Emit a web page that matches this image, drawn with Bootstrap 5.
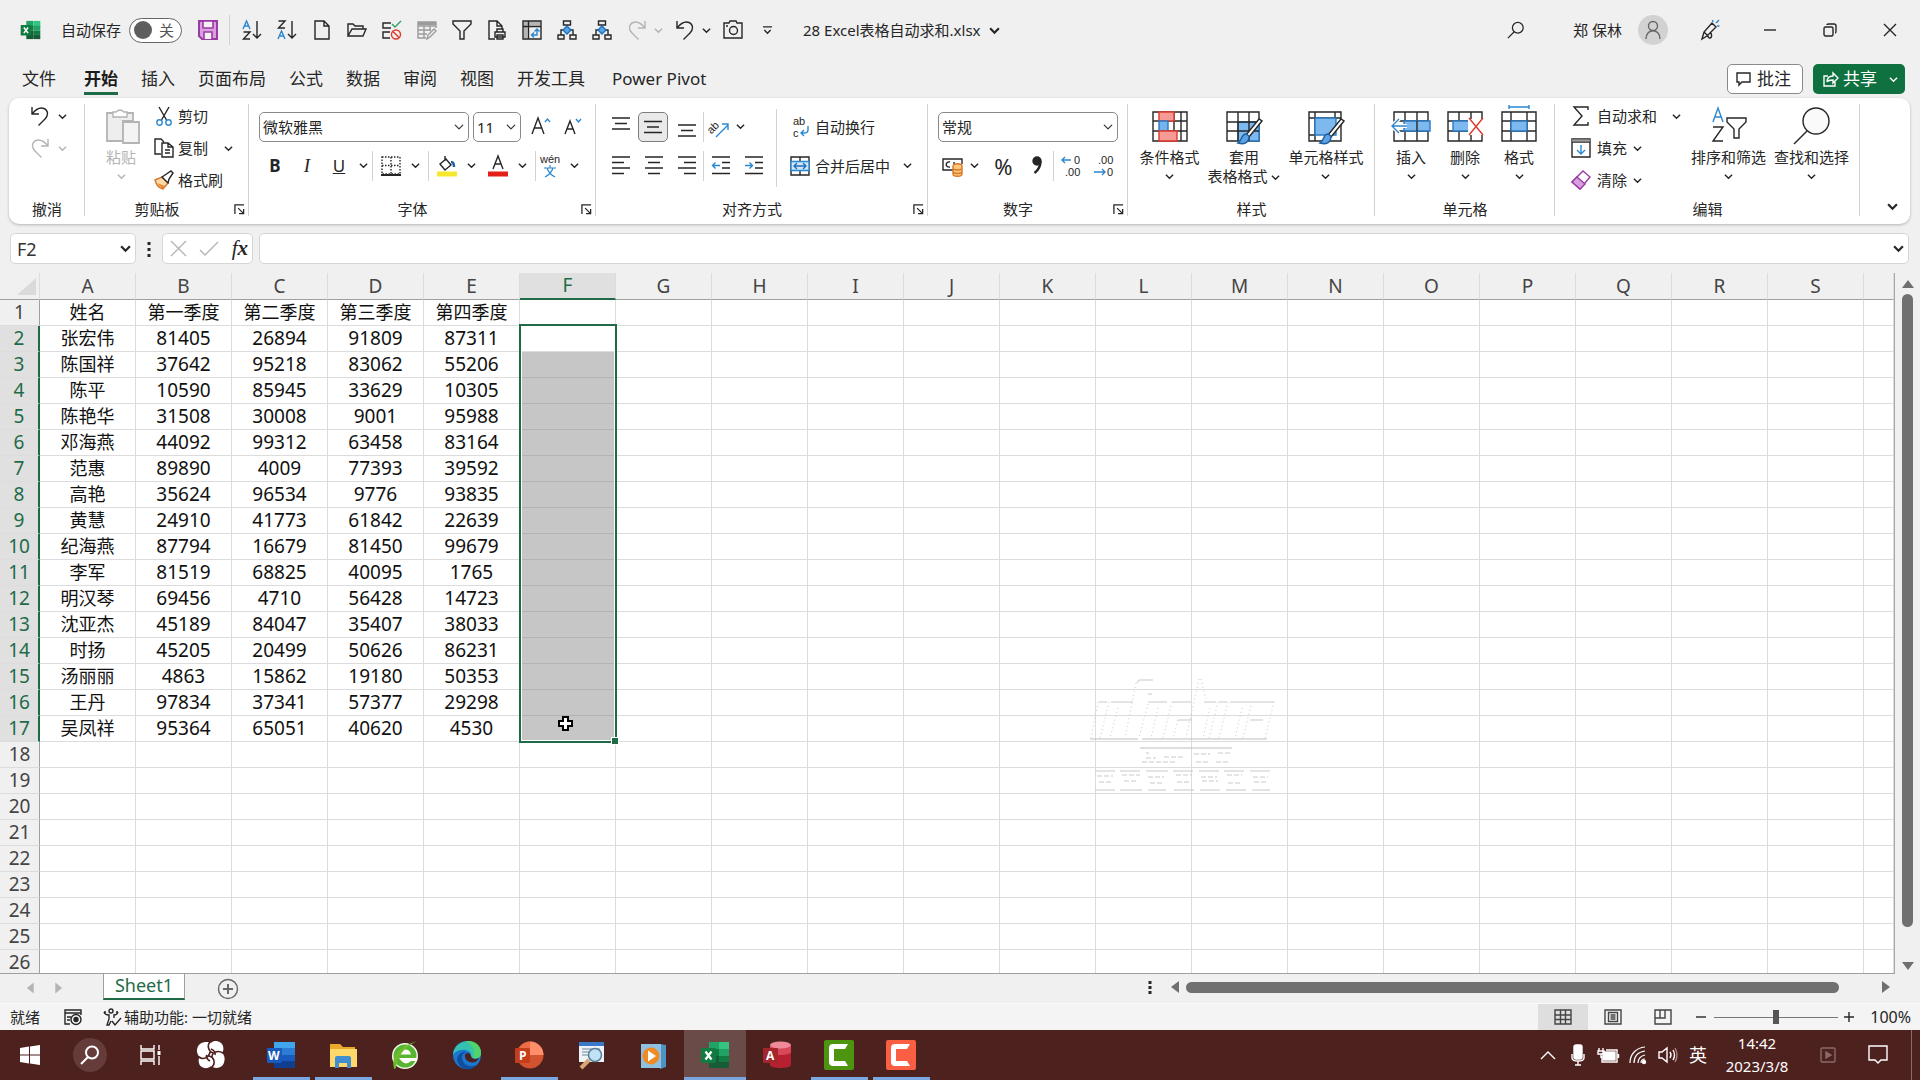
<!DOCTYPE html>
<html lang="zh-CN">
<head>
<meta charset="utf-8">
<meta name="viewport" content="width=device-width, initial-scale=1">
<title>28 Excel表格自动求和.xlsx</title>
<link href="https://cdn.jsdelivr.net/npm/bootstrap@5.3.0/dist/css/bootstrap.min.css" rel="stylesheet">
<style>
:root{--ink:#262626;--line:#d2d2d2;--green:#1f6b47;--chrome:#f0f0f0;--blue:#2b88d0}
body{background:var(--chrome);color:var(--ink);font:15px/20px "Noto Sans","Noto Sans CJK SC",sans-serif;overflow:hidden}
button{border:0;background:none;padding:0;color:inherit;font:inherit;white-space:nowrap}
svg{display:block;fill:none;stroke:currentColor;stroke-width:1.4;flex:none;overflow:visible}
svg text{stroke:none;fill:currentColor}
svg .tiny{font-family:"Liberation Sans",sans-serif;font-size:11px}
.ic{width:20px;height:20px}
.solid{fill:#6f6f6f;stroke:none}
.dim{color:#b4b4b4}
.chev{width:9px;height:9px;stroke-width:1.6}
.chev-lg{width:11px;height:11px;stroke-width:2}
.cell-btn{width:35px;height:34px;display:flex;align-items:center;justify-content:center}
.caret-btn{width:13px;height:34px;display:flex;align-items:center;justify-content:flex-start}
/* title bar */
.titlebar{height:60px;padding-left:20px}
.auto-toggle{width:53px;height:25px;border:1px solid #666;border-radius:13px;background:#fff;padding:0 7px 0 4px;color:#555}
.auto-toggle input{appearance:none;width:18px;height:18px;border-radius:50%;background:#5e5e5e;margin:0}
.vline{width:1px;height:30px;background:var(--line)}
.vline.tall{height:78px;margin:9px 12px 0 6px}
.doc-title{margin-left:18px}
.avatar{width:30px;height:30px;border-radius:50%;background:#d2d2d2;margin-right:12px}
.win-btn{width:60px;height:34px;display:flex;align-items:center;justify-content:center}
/* tabs */
.tabs{height:38px;padding:0 15px 0 22px}
.tabs .nav-link{padding:2px 0 0;margin-right:23px;color:var(--ink);font-size:17px;line-height:26px;border-bottom:3px solid transparent}
.tabs .nav-link:first-child{margin-right:28px}
.tabs .nav-link.active{font-weight:700;border-color:var(--green);color:#1c1c1c}
.top-btn{height:30px;border-radius:5px;font-size:17px;line-height:28px}
.top-btn.comment{border:1px solid #8a8a8a;background:#fff;width:76px;padding:0 8px;gap:6px}
.top-btn.share{background:#0f7040;color:#fff;width:92px;margin-left:10px;padding:0 7px 0 10px;gap:4px}
/* ribbon */
.ribbon{margin:0 10px 0 9px;height:126px;background:#fff;border-radius:10px;box-shadow:0 1px 3px rgba(0,0,0,.25);padding-top:2px}
.rgroup{background:linear-gradient(var(--line),var(--line)) right 4px/1px 112px no-repeat;height:117px}
.glabel{font-size:15px;line-height:18px;height:18px;text-align:center}
.rbody{height:100px}
.launch{width:20px;height:18px;display:flex;align-items:center;justify-content:center}
.stack button{height:32px;display:flex;align-items:center;gap:4px}
.stack.wide button{gap:6px}
.clip-list{padding-left:13px}
.two{padding-top:7px}
.two>div{height:39px;display:flex;align-items:center}
.big{display:flex;flex-direction:column;align-items:center;padding-top:9px}
.big svg.bi{width:40px;height:36px}
.big span{line-height:22px;margin-top:1px}
.big span.second{margin-top:-3px}
.big .chev{margin-top:4px}
.big+.big.find-big{margin-left:8px}
.big.sort-big{margin-left:10px}
.cells-row{gap:14px}
.tool{width:33px;height:30px;display:flex;align-items:center;justify-content:center}
.slim .tool{width:32px}
.tool.on{width:30px;margin:0 2px 0 1px;border:1px solid #7d7d7d;border-radius:5px;background:#e9e9e9}
.t-bold{font-size:17px;font-weight:700}
.t-ital{font:italic 19px "Liberation Serif",serif}
.t-under{font-size:17px;text-decoration:underline}
.t-pct{font-size:22px}
.split{width:37px;height:30px;display:flex;align-items:center;justify-content:space-between}
.slim .split{width:39px}
.split.near{margin-left:12px}
.combo{height:30px;border:1px solid #8a8a8a;border-radius:5px;font-size:15px;line-height:20px;padding:0 18px 0 3px;background-color:#fff;background-size:10px 10px;background-position:right 4px center;color:var(--ink)}
.w-font{width:210px}.w-size{width:48px}.w-num{width:180px}
.p10{padding-left:10px}
.g-undo{width:76px}.g-undo .stack{padding-left:21px}.g-clip{width:164px}.g-font{width:347px}.g-align{width:332px}.g-num{width:200px}.g-style{width:247px}.g-cells{width:180px}.g-edit{width:305px}
.edit-list{width:126px;padding-left:16px}
/* formula bar */
.fbar{padding:9px 11px 9px 10px}
.fbox{height:31px;background:#fff;border:1px solid #d6d6d6;border-radius:5px}
.fbox input{border:0;outline:0;background:none;width:100%;min-width:0;font-size:18px;line-height:24px;padding:0 6px;color:#333}
.namebox{width:126px}.fxbox{width:91px;margin-right:6px}
.fx{font:italic 700 21px "Liberation Serif",serif}
/* grid */
.grid-wrap{min-height:0}
.sheet{min-width:0;overflow:hidden;background:#fff;border-right:1px solid #a8a8a8;border-bottom:1px solid #a0a0a0}
.sheet table{table-layout:fixed;border-collapse:separate;border-spacing:0;width:100%;font-size:19px;line-height:25px;color:#111}
.sheet col.rowno{width:40px}.sheet col.std{width:96px}
.sheet th,.sheet td{height:26px;padding:0;text-align:center;border-right:1px solid #dcdcdc;border-bottom:1px solid #dcdcdc;overflow:hidden;white-space:nowrap}
.sheet th{background:var(--chrome);font-weight:400;color:#444}
.sheet thead th{border-bottom-color:#a0a0a0}
.sheet tbody th{border-right-color:#a0a0a0}
.sheet .zh{font-size:18px}
.sheet th.hit{background:#e0e0e0;color:var(--green)}
.sheet thead th.hit{border-bottom:2px solid var(--green)}
.sheet tbody th.hit{border-right:2px solid var(--green)}
.sheet td.shade{background:#c6c6c6;border-bottom-color:#b3b3b3}
.corner{width:0;height:0;border-left:19px solid transparent;border-bottom:17px solid #dadada;margin-left:17px}
.selbox{left:519px;top:51px;width:98px;height:419px;border:2px solid var(--green);outline:1px solid #fff;outline-offset:-3px}
.selbox i{right:-3px;bottom:-3px;width:6px;height:6px;background:var(--green);box-shadow:0 0 0 1px #fff}
.pointer{left:558px;top:443px;width:15px;height:15px}
.wm{left:1090px;top:402px;width:190px;height:126px;color:#c9c9c9;stroke-width:1}
.vscroll{width:25px;flex:none;padding:6px 0 3px}
.vthumb{width:11px;background:#707070;border-radius:6px;margin:5px 0 34px}
.tri{fill:#6f6f6f;stroke:none;width:12px;height:10px}
/* bottom bars */
.sheetbar{height:29px}
.sheet-nav{gap:21px;padding:9px 41px 0 27px}
.sheet-tab{width:82px;height:26px;background:#fff;color:var(--green);font-size:18px;line-height:20px;padding-bottom:3px;border:solid #a0a0a0;border-width:0 1px;border-bottom:2px solid var(--green);text-align:center;margin-right:32px}
.hscroll{padding:4px 29px 0 0}
.hthumb{height:11px;background:#707070;border-radius:6px;width:653px;margin:0 42px 0 6px}
.status{height:27px;background:#f4f4f4;border-top:1px solid #fafafa}
.ready{margin:0 24px 0 10px}
.view-btn{width:50px;height:26px;display:flex;align-items:center;justify-content:center;color:#444}
.view-btn.on{background:#dedede}
.zoom-range{appearance:none;width:124px;height:20px;background:linear-gradient(#777,#777) center/100% 1px no-repeat}
.zoom-range::-webkit-slider-thumb{appearance:none;width:6px;height:14px;background:#555}
.zoom-val{font-size:16px;margin:0 9px 0 12px}
.taskbar{height:50px;background:#4c211e;color:#fff}
.task{width:62px;height:50px;display:flex;align-items:center;justify-content:center;border-bottom:3px solid transparent}
.task svg{width:30px;height:30px;stroke:none;margin-top:2px}
.task svg text{font:700 12px "Open Sans","Noto Sans",sans-serif;fill:#fff}
.task.run{border-image:linear-gradient(90deg,transparent 6px,#7aa7df 6px,#7aa7df 57px,transparent 57px) 3}
.task.cur{background:#6b4b47;border-bottom-color:#7aa7df}
.sys{width:60px;height:50px;display:flex;align-items:center;justify-content:center}
.round{width:34px;height:34px;border-radius:50%;background:#663c3a;display:flex;align-items:center;justify-content:center}
.round svg{stroke-width:2}
.tray{width:30px;height:50px;display:flex;align-items:center;justify-content:center}
.ime{font-size:18px}
.clock{width:88px;font-size:15px;line-height:23px;text-align:center}
.faint{color:#8a6a68;margin:0 20px 0 12px}
.edge-line{width:1px;height:50px;background:#8a6a68;margin:0 8px 0 18px}
</style>
<script src="https://cdn.jsdelivr.net/npm/bootstrap@5.3.0/dist/js/bootstrap.bundle.min.js"></script>
</head>
<body class="vh-100 d-flex flex-column">
<svg width="0" height="0" class="position-absolute" aria-hidden="true">
<symbol id="chev" viewBox="0 0 10 10"><path d="M1 3l4 4 4-4"/></symbol>
<symbol id="undo" viewBox="0 0 20 20"><path d="M2 1v7h7M2 8C6 3 10 1 14 2.500c5 2.500 4 7.500 1 10.500L8.500 19.500"/></symbol>
<symbol id="redo" viewBox="0 0 20 20"><path d="M18 1v7h-7M18 8C14 3 10 1 6 2.500c-5 2.500-4 7.500-1 10.500l6.500 6.500"/></symbol>
<symbol id="org" viewBox="0 0 20 20"><path d="M6.500 1h7v4h-7zM1 15h6v4H1zM13 15h6v4h-6zM10 5v2M4 15v-5h12v5"/><path d="M10 6l4 4-4 4-4-4z" fill="#56a4e6" stroke="#1f70b8"/></symbol>
<symbol id="launch" viewBox="0 0 12 12"><path d="M1 11V1h10M4.500 4.500L10.500 10.500M10.500 5.500v5h-5"/></symbol>
<symbol id="excel" viewBox="0 0 30 30"><g stroke="none"><path d="M9 2h10v8H9z" fill="#21a366"/><path d="M19 2h10v8H19z" fill="#33c481"/><path d="M9 9h10v7H9z" fill="#107c41"/><path d="M19 9h10v7H19z" fill="#21a366"/><path d="M9 16h10v12H9z" fill="#185c37"/><path d="M19 16h10v6H19z" fill="#107c41"/><path d="M19 22h10v6H19z" fill="#185c37"/><rect x="1" y="8" width="15" height="15" rx="1" fill="#107c41"/></g><path d="M5.500 11.500l6 8M11.500 11.500l-6 8" stroke="#fff" stroke-width="2.200"/></symbol>
<symbol id="find" viewBox="0 0 20 20"><circle cx="12" cy="7.500" r="6"/><path d="M8 12l-7 7"/></symbol>
</svg>

<header class="titlebar d-flex align-items-center flex-shrink-0">
  <svg width="21" height="22"><use href="#excel"/></svg>
  <label for="autosave" class="ms-3 ps-1">自动保存</label>
  <label class="auto-toggle d-flex align-items-center justify-content-between ms-2"><input type="checkbox" role="switch" id="autosave">关</label>
  <button class="cell-btn ms-2 me-1" aria-label="保存"><svg class="ic" viewBox="0 0 20 20" color="#9b3aa5"><path d="M1 1h18v18H4l-3-3z" fill="#d9a0de" stroke-width="2"/><path d="M5 1h10v7H5zM6 19v-7h8v7" fill="#f3f0f3" stroke-width="1.600"/></svg></button>
  <div class="vline me-1"></div>
  <button class="cell-btn" aria-label="升序"><svg class="ic" viewBox="0 0 20 20"><path d="M1 9l3.500-8L8 9M2 6h5" stroke="#2b88d0"/><path d="M1.500 12H8l-6.500 7H8M15 1v17M11 14l4 4 4-4"/></svg></button>
  <button class="cell-btn" aria-label="降序"><svg class="ic" viewBox="0 0 20 20"><path d="M1 19l3.500-8L8 19M2 16h5" stroke="#2b88d0"/><path d="M1.500 1H8L1.500 8H8M15 1v17M11 14l4 4 4-4"/></svg></button>
  <button class="cell-btn" aria-label="新建"><svg class="ic" viewBox="0 0 20 20"><path d="M3 1h9l5 5v13H3zM12 1v5h5"/></svg></button>
  <button class="cell-btn" aria-label="打开"><svg class="ic" viewBox="0 0 20 20"><path d="M1 16V4h5l2 2h8v3M1 16L5 9h14l-3 7z"/></svg></button>
  <button class="cell-btn" aria-label="拼写检查"><svg class="ic" viewBox="0 0 20 20"><path d="M9 3H1v5h8M8 12H1v6h7"/><path d="M10 4l3 3 6-6" stroke="#2e9e62"/><circle cx="14" cy="14.500" r="4.500" stroke="#e0392b"/><path d="M11 11.500l6 6" stroke="#e0392b"/></svg></button>
  <button class="cell-btn" aria-label="编辑表格"><svg class="ic" viewBox="0 0 20 20" color="#9b9b9b"><path d="M9 18H1V2h18v6M1 6h18M1 10h13M1 14h9M7 6v12M13 6v5M10 19l1-4 6-6 2 2-6 6z"/><path d="M1 3.500h18" stroke-width="3"/></svg></button>
  <button class="cell-btn" aria-label="筛选"><svg class="ic" viewBox="0 0 20 20"><path d="M1 1h18v3l-7 7v8H8v-8L1 4z"/></svg></button>
  <button class="cell-btn" aria-label="打印预览"><svg class="ic" viewBox="0 0 20 20"><path d="M8 19H2V1h8l5 5v3M10 1v5h5M8 12h10v5H8zM10 12V9h6v3M10 15h6v4h-6z"/></svg></button>
  <button class="cell-btn" aria-label="数据透视表"><svg class="ic" viewBox="0 0 20 20"><path d="M2 3.500h16M3.500 2v16" stroke="#b5b5b5" stroke-width="4"/><path d="M1 1h18v18H1zM1 6.500h18M6.500 1v18"/><path d="M10 15h5V9M12 12.500L9.500 15l2.500 2.500M12.500 11.500L15 9l2.500 2.500" stroke="#2b88d0"/></svg></button>
  <button class="cell-btn" aria-label="组织"><svg class="ic"><use href="#org"/></svg></button>
  <button class="cell-btn" aria-label="关系"><svg class="ic"><use href="#org"/></svg></button>
  <button class="cell-btn dim" aria-label="恢复"><svg class="ic"><use href="#redo"/></svg></button>
  <button class="caret-btn dim" aria-label="恢复选项"><svg class="chev"><use href="#chev"/></svg></button>
  <button class="cell-btn" aria-label="撤消"><svg class="ic"><use href="#undo"/></svg></button>
  <button class="caret-btn" aria-label="撤消选项"><svg class="chev"><use href="#chev"/></svg></button>
  <button class="cell-btn" aria-label="照相机"><svg class="ic" viewBox="0 0 20 20"><path d="M1 3h5l1-2h6l1 2h5v15H1z"/><circle cx="10.500" cy="10.500" r="4"/><path d="M3 6h2"/></svg></button>
  <button class="cell-btn" aria-label="自定义"><svg class="chev" viewBox="0 0 10 10"><path d="M0 1h10M1.500 4.500L5 8l3.500-3.500"/></svg></button>
  <div class="doc-title">28 Excel表格自动求和.xlsx</div>
  <button class="ms-1 ps-1" aria-label="文件名选项"><svg class="chev-lg"><use href="#chev"/></svg></button>
  <div class="ms-auto d-flex align-items-center">
    <button class="me-5" aria-label="搜索"><svg width="18" height="18"><use href="#find"/></svg></button>
    <span class="me-3">郑 保林</span>
    <span class="avatar d-flex align-items-center justify-content-center"><svg class="ic" viewBox="0 0 20 20" color="#666"><circle cx="10" cy="6" r="4.500"/><path d="M3 19c0-11 14-11 14 0"/></svg></span>
    <button class="win-btn" aria-label="新功能"><svg class="ic" viewBox="0 0 20 20"><path d="M2 19L4 12L12 3l4 4L7 16zM4 12l4 4M8 16c1 4 5 2 3-3"/><path d="M13 2l-.500-2M16 3l3-3M17 6h2.500" stroke="#2b88d0"/></svg></button>
    <button class="win-btn" aria-label="最小化"><svg width="14" height="14"><path d="M1 7h12"/></svg></button>
    <button class="win-btn" aria-label="还原"><svg width="14" height="14"><rect x="1" y="4" width="9" height="9" rx="1.500"/><path d="M4 2q0-1 2-1h5q2 0 2 2v5q0 2-1 2"/></svg></button>
    <button class="win-btn" aria-label="关闭"><svg width="14" height="14"><path d="M1 1l12 12M13 1L1 13"/></svg></button>
  </div>
</header>

<nav class="tabs nav flex-nowrap align-items-center flex-shrink-0">
  <a class="nav-link" href="#">文件</a><a class="nav-link active" href="#">开始</a><a class="nav-link" href="#">插入</a><a class="nav-link" href="#">页面布局</a><a class="nav-link" href="#">公式</a><a class="nav-link" href="#">数据</a><a class="nav-link" href="#">审阅</a><a class="nav-link" href="#">视图</a><a class="nav-link" href="#">开发工具</a><a class="nav-link ms-1" href="#">Power Pivot</a>
  <button class="top-btn comment d-flex align-items-center ms-auto"><svg width="15" height="16"><path d="M1 2h13v9H6l-3 3v-3H1z"/></svg>批注</button>
  <button class="top-btn share d-flex align-items-center"><svg width="16" height="16"><path d="M5 5H1v10h11v-4M4 11c0-5 3-6 6-6V2l5 5-5 5V9c-3 0-5 0-6 2z"/></svg>共享<svg class="chev ms-auto"><use href="#chev"/></svg></button>
</nav>

<section class="ribbon d-flex flex-shrink-0">
  <div class="rgroup g-undo">
    <div class="rbody stack">
      <div class="d-flex align-items-center gap-2"><button aria-label="撤消"><svg class="ic"><use href="#undo"/></svg></button><button aria-label="撤消列表"><svg class="chev"><use href="#chev"/></svg></button></div>
      <div class="d-flex align-items-center gap-2 dim"><button aria-label="恢复"><svg class="ic"><use href="#redo"/></svg></button><button aria-label="恢复列表"><svg class="chev"><use href="#chev"/></svg></button></div>
    </div>
    <div class="glabel">撤消</div>
  </div>
  <div class="rgroup g-clip">
    <div class="rbody d-flex ps-3">
      <button class="big dim"><svg class="bi" viewBox="0 0 40 36"><path d="M6 4h26v8H22v20H6z" fill="#eee" stroke-width="1.800"/><path d="M12 8V3h3q4-4 8 0h3v5z" fill="#fff"/><path d="M22 13h16v21H22z" fill="#f4f4f4" stroke-width="1.800"/></svg><span>粘贴</span><svg class="chev"><use href="#chev"/></svg></button>
      <div class="stack clip-list flex-grow-1">
        <button><svg class="ic" viewBox="0 0 20 20"><path d="M5 1l7.500 13M15 1L7.500 14"/><circle cx="5.500" cy="16.500" r="2.700" stroke="#2b88d0"/><circle cx="14.500" cy="16.500" r="2.700" stroke="#2b88d0"/></svg>剪切</button>
        <div class="d-flex justify-content-between pe-3"><button><svg class="ic" viewBox="0 0 20 20"><path d="M7 16H1V1h6l3 3M8 5h6l5 4v10H8zM14 5v4h5M11 12h5M11 15h5"/></svg>复制</button><button aria-label="复制选项"><svg class="chev"><use href="#chev"/></svg></button></div>
        <button><svg class="ic" viewBox="0 0 20 20"><path d="M1 10l7-3 6 6-5 6c-4-1-7-5-8-9z" fill="#fbd9a8" stroke="#d9772b"/><path d="M3 13l8 3-2 3z" fill="#e8862b" stroke="none"/><path d="M8 7l3-2 6-4 2 2-4 6-1 4z" fill="#fff"/></svg>格式刷</button>
      </div>
    </div>
    <div class="d-flex"><div class="glabel flex-grow-1">剪贴板</div><button class="launch" aria-label="剪贴板设置"><svg width="11" height="11"><use href="#launch"/></svg></button></div>
  </div>
  <div class="rgroup g-font">
    <div class="rbody two slim p10">
      <div><select class="form-select combo w-font" aria-label="字体"><option>微软雅黑</option></select><select class="form-select combo w-size ms-1" aria-label="字号"><option>11</option></select>
        <button class="tool ms-1" aria-label="增大字号"><svg class="ic" viewBox="0 0 20 20"><path d="M1 17L7 1l6 16M3 11h8"/><path d="M14 5l2.500-3L19 5" stroke="#2b88d0"/></svg></button>
        <button class="tool" aria-label="减小字号"><svg class="ic" viewBox="0 0 20 20"><path d="M2 17L7 4l5 13M4 12h6"/><path d="M13 2l2.500 3L18 2" stroke="#2b88d0"/></svg></button></div>
      <div>
        <button class="tool t-bold" aria-label="加粗">B</button>
        <button class="tool t-ital" aria-label="倾斜">I</button>
        <button class="tool t-under" aria-label="下划线">U</button><button aria-label="下划线选项" class="caret-btn ms-1"><svg class="chev"><use href="#chev"/></svg></button>
        <div class="vline me-2"></div>
        <button class="split" aria-label="边框"><svg class="ic" viewBox="0 0 20 20"><path d="M1 1h18v17H1zM10 1v17M1 9.500h18" stroke-dasharray="1.500 1.500"/><path d="M0 19h20" stroke-width="2"/></svg><svg class="chev"><use href="#chev"/></svg></button>
        <div class="vline ms-2 me-2"></div>
        <button class="split" aria-label="填充颜色"><svg class="ic" viewBox="0 0 20 20"><path d="M8 0v5M3 8l6-5 5 6-6 5z"/><path d="M14 6c3 0 3 3 3 5" stroke="#2063a5" stroke-width="2.500"/><path d="M0 18h20" stroke="#f7e82c" stroke-width="5"/></svg><svg class="chev"><use href="#chev"/></svg></button>
        <button class="split near" aria-label="字体颜色"><svg class="ic" viewBox="0 0 20 20"><path d="M5 13L10 0l5 13M7 8h6"/><path d="M0 18h20" stroke="#e32017" stroke-width="5"/></svg><svg class="chev"><use href="#chev"/></svg></button>
        <div class="vline ms-2 me-1"></div>
        <button class="split" aria-label="拼音"><svg width="20" height="26"><text class="tiny" x="0" y="10">wén</text><path d="M10 12v3M4 15h12M7 15q2 6 8 9M13 15q-2 6-8 9" stroke="#2b88d0" stroke-width="1.200"/></svg><svg class="chev"><use href="#chev"/></svg></button>
      </div>
    </div>
    <div class="d-flex"><div class="glabel flex-grow-1">字体</div><button class="launch" aria-label="字体设置"><svg width="11" height="11"><use href="#launch"/></svg></button></div>
  </div>
  <div class="rgroup g-align">
    <div class="d-flex rbody">
    <div class="two ps-2">
      <div><button class="tool" aria-label="顶端对齐"><svg class="ic" viewBox="0 0 20 20"><path d="M1 1h18M4 6.500h12M1 12h18"/></svg></button><button class="tool on" aria-label="垂直居中"><svg class="ic" viewBox="0 0 20 20"><path d="M1 4.500h18M4 10h12M1 15.500h18"/></svg></button><button class="tool" aria-label="底端对齐"><svg class="ic" viewBox="0 0 20 20"><path d="M1 8h18M4 13.500h12M1 19h18"/></svg></button>
        <div class="vline me-1"></div><button class="split" aria-label="方向"><svg width="22" height="22"><text class="tiny" x="-2" y="14" transform="rotate(-45 6 10)">ab</text><path d="M8 21L20 9M14 8h6v6" stroke="#2b88d0"/></svg><svg class="chev"><use href="#chev"/></svg></button></div>
      <div><button class="tool" aria-label="左对齐"><svg class="ic" viewBox="0 0 20 20"><path d="M1 1h18M1 6.500h12M1 12h18M1 17.500h12"/></svg></button><button class="tool" aria-label="居中"><svg class="ic" viewBox="0 0 20 20"><path d="M1 1h18M4 6.500h12M1 12h18M4 17.500h12"/></svg></button><button class="tool" aria-label="右对齐"><svg class="ic" viewBox="0 0 20 20"><path d="M1 1h18M7 6.500h12M1 12h18M7 17.500h12"/></svg></button>
        <div class="vline"></div>
        <button class="tool" aria-label="减少缩进"><svg class="ic" viewBox="0 0 20 20"><path d="M1 1h18M11 6.500h8M11 12h8M1 17.500h18"/><path d="M9 9.500H1.500M4.500 6.500l-3 3 3 3" stroke="#2b88d0"/></svg></button><button class="tool" aria-label="增加缩进"><svg class="ic" viewBox="0 0 20 20"><path d="M1 1h18M11 6.500h8M11 12h8M1 17.500h18"/><path d="M1 9.500h7.500M5.500 6.500l3 3-3 3" stroke="#2b88d0"/></svg></button></div>
    </div>
    <div class="vline tall"></div>
    <div class="two flex-grow-1">
      <div><button class="d-flex align-items-center gap-1"><svg width="22" height="22"><text class="tiny" x="4" y="9">ab</text><text class="tiny" x="4" y="21">c</text><path d="M19 10v4q0 3-4 3h-3M15 14l-3 3 3 3" stroke="#2b88d0"/></svg>自动换行</button></div>
      <div class="justify-content-between pe-3"><button class="d-flex align-items-center gap-1"><svg width="22" height="22" viewBox="-1 -1 22 22"><path d="M1 1h18v18H1zM10 1v5M10 14v5" /><path d="M1 5.500h18v9H1z" fill="#cfe6fa" stroke="#2b88d0"/><path d="M4 10h12M7 7l-3 3 3 3M13 7l3 3-3 3" stroke="#1f6fb5"/></svg>合并后居中</button><button aria-label="合并选项"><svg class="chev"><use href="#chev"/></svg></button></div>
    </div></div>
    <div class="d-flex"><div class="glabel flex-grow-1">对齐方式</div><button class="launch" aria-label="对齐设置"><svg width="11" height="11"><use href="#launch"/></svg></button></div>
  </div>
  <div class="rgroup g-num">
    <div class="rbody two p10">
      <div><select class="form-select combo w-num" aria-label="数字格式"><option>常规</option></select></div>
      <div><button class="split ms-1" aria-label="会计格式"><svg width="22" height="22"><path d="M11 15H1V4h19v5M8 7c-5-1-5 6 0 5M12 7v2"/><path d="M11 11v8c0 3 9 3 9 0v-8c0-3-9-3-9 0zM11 13.500c1 2 8 2 9 0M11 17c1 2 8 2 9 0" fill="#fbc877" stroke="#d9772b"/></svg><svg class="chev"><use href="#chev"/></svg></button>
      <button class="tool t-pct ms-2" aria-label="百分比">%</button>
      <button class="tool" aria-label="千位分隔"><svg class="ic" viewBox="0 0 20 20"><circle cx="10" cy="5" r="4" fill="currentColor"/><path d="M13.500 5c0 5-2 9-6 12" stroke-width="2.500"/></svg></button>
      <div class="vline"></div>
      <button class="tool" aria-label="增加小数位"><svg width="20" height="22"><text class="tiny" x="13" y="9">0</text><text class="tiny" x="4" y="21">.00</text><path d="M10 5H1M4 2L1 5l3 3" stroke="#2b88d0"/></svg></button>
      <button class="tool" aria-label="减少小数位"><svg width="20" height="22"><text class="tiny" x="4" y="9">.00</text><text class="tiny" x="13" y="21">0</text><path d="M0 17h11M8 14l3 3-3 3" stroke="#2b88d0"/></svg></button></div>
    </div>
    <div class="d-flex"><div class="glabel flex-grow-1">数字</div><button class="launch" aria-label="数字设置"><svg width="11" height="11"><use href="#launch"/></svg></button></div>
  </div>
  <div class="rgroup g-style">
    <div class="rbody d-flex justify-content-center align-items-start gap-2">
      <button class="big"><svg class="bi" viewBox="0 0 40 36"><path d="M3 3h34v29H3zM3 12h34M3 22h34M10 3v29M24 3v29M31 3v29"/><path d="M9 3h15v9H9z" fill="#f59a95" stroke="#e0392b"/><path d="M9 12h9v10H9z" fill="#74b3ec" stroke="#2b78c0"/><path d="M9 22h18v10H9z" fill="#f59a95" stroke="#e0392b"/></svg><span>条件格式</span><svg class="chev"><use href="#chev"/></svg></button>
      <button class="big"><svg class="bi" viewBox="0 0 40 36"><path d="M3 3h32v29H3z"/><path d="M14 13h21v19H14z" fill="#7db9ef" stroke="#2b78c0"/><path d="M3 13h32M3 22h32M14 3v29M25 3v29"/><path d="M38 12L25 28l-3-2 13-16z" fill="#fff"/><path d="M22 25c-5 0-4 7-8 9 6 2 11 0 11-7z" fill="#5ba2e4" stroke="#1f5f9f"/></svg><span>套用</span><span class="second">表格格式 <svg class="chev d-inline m-0"><use href="#chev"/></svg></span></button>
      <button class="big"><svg class="bi" viewBox="0 0 40 36"><path d="M3 3h32v29H3zM3 9h32M9 3v29M29 3v6M3 26h6"/><path d="M9 9h21v17H9z" fill="#7db9ef" stroke="#2b78c0"/><path d="M38 12L25 28l-3-2 13-16z" fill="#fff"/><path d="M22 25c-5 0-4 7-8 9 6 2 11 0 11-7z" fill="#5ba2e4" stroke="#1f5f9f"/></svg><span>单元格样式</span><svg class="chev"><use href="#chev"/></svg></button>
    </div>
    <div class="glabel">样式</div>
  </div>
  <div class="rgroup g-cells">
    <div class="rbody cells-row d-flex justify-content-center">
      <button class="big"><svg class="bi" viewBox="0 0 40 36"><path d="M3 3h34v29H3zM3 12h34M3 22h34M14 3v29M26 3v29"/><path d="M13 12h26v10H13z" fill="#7db9ef" stroke="#2b78c0"/><path d="M26 12v10"/><path d="M16 17H1M8 10l-7 7 7 7" stroke="#fff" stroke-width="4"/><path d="M16 17H1M8 10l-7 7 7 7" stroke="#2b88d0"/></svg><span>插入</span><svg class="chev"><use href="#chev"/></svg></button>
      <button class="big"><svg class="bi" viewBox="0 0 40 36"><path d="M3 3h34v29H3zM3 12h34M3 22h34M14 3v29M26 3v29"/><path d="M8 12h16v10H8z" fill="#7db9ef" stroke="#2b78c0"/><path d="M23 10h17v16H23z" fill="#fff" stroke="none"/><path d="M24 9l14 17M38 9L24 26" stroke="#e0392b"/></svg><span>删除</span><svg class="chev"><use href="#chev"/></svg></button>
      <button class="big"><svg class="bi" viewBox="0 0 40 36"><path d="M3 3h34v29H3zM3 12h34M3 22h34M12 3v29M28 3v29"/><path d="M12 12h16v10H12z" fill="#7db9ef" stroke="#2b78c0"/><path d="M10-2h20M10-4v4M30-4v4" stroke="#2b88d0"/></svg><span>格式</span><svg class="chev"><use href="#chev"/></svg></button>
    </div>
    <div class="glabel">单元格</div>
  </div>
  <div class="rgroup g-edit">
    <div class="rbody d-flex">
      <div class="stack wide edit-list">
        <div class="d-flex justify-content-between"><button><svg class="ic" viewBox="0 0 20 20"><path d="M17 4V1H3l8 9-8 9h14v-3"/></svg>自动求和</button><button aria-label="求和选项"><svg class="chev"><use href="#chev"/></svg></button></div>
        <button><svg class="ic" viewBox="0 0 20 20"><path d="M1 1h18v18H1zM1 4h18"/><path d="M1 2.500h18" stroke="#999" stroke-width="2"/><path d="M10 7v9M6 12l4 4 4-4" stroke="#2b88d0"/></svg><span>填充</span><svg class="chev"><use href="#chev"/></svg></button>
        <button><svg class="ic" viewBox="0 0 20 20" color="#9b3aa5"><path d="M12 1l7 6-10 12-8-7z" fill="#fff"/><path d="M6 7l8 7-5 5-8-7z" fill="#d9a0de"/></svg><span>清除</span><svg class="chev"><use href="#chev"/></svg></button>
      </div>
      <button class="big sort-big"><svg class="bi" viewBox="0 0 40 36"><path d="M4 13L9-1l5 14M6 8h6" stroke="#2b88d0"/><path d="M4 18h10L4 32h10M18 9h19v4l-7 7v9h-5v-9l-7-7z"/></svg><span>排序和筛选</span><svg class="chev"><use href="#chev"/></svg></button>
      <button class="big find-big"><svg class="bi" viewBox="0 0 40 36"><circle cx="24" cy="12" r="13" fill="#fafafa"/><path d="M15 22L2 35"/></svg><span>查找和选择</span><svg class="chev"><use href="#chev"/></svg></button>
    </div>
    <div class="glabel">编辑</div>
  </div>
  <button class="ms-auto align-self-end pe-2 me-1 pb-2 mb-1" aria-label="折叠功能区"><svg class="chev-lg"><use href="#chev"/></svg></button>
</section>

<section class="fbar d-flex align-items-center flex-shrink-0">
  <div class="fbox namebox d-flex align-items-center pe-1"><input aria-label="名称框" value="F2"><svg class="chev-lg"><use href="#chev"/></svg></div>
  <svg width="26" height="16"><path d="M13 1v3M13 7v3M13 13v3" stroke-width="3"/></svg>
  <div class="fbox fxbox d-flex align-items-center justify-content-between ps-2 pe-1">
    <button class="dim" aria-label="取消"><svg width="15" height="15"><path d="M0 0l15 15M15 0L0 15"/></svg></button>
    <button class="dim" aria-label="输入"><svg width="20" height="15"><path d="M1 9l5 5L19 1"/></svg></button>
    <button aria-label="插入函数" class="fx"><span class="fw-normal">f</span>x</button>
  </div>
  <div class="fbox flex-grow-1 d-flex align-items-center pe-1"><input aria-label="编辑栏"><svg class="chev-lg"><use href="#chev"/></svg></div>
</section>

<main class="grid-wrap d-flex flex-grow-1">
  <div class="sheet flex-grow-1 position-relative">
    <table id="grid"></table>
    <div class="selbox position-absolute"><i class="position-absolute"></i></div>
    <svg class="pointer position-absolute" viewBox="0 0 15 15"><path d="M5 1h5v4h4v5h-4v4H5v-4H1V5h4z" fill="#fff" stroke="#000" stroke-width="2"/></svg>
    <svg class="wm position-absolute" viewBox="0 0 190 126">
      <path d="M9 27h8M21 27h22M49 5l-2 3M49 5h14M58 19h4M58 27h19M82 27h19M114 27h12M129 27h8M140 27h21M162 27h22M88 45h14M160 45h13"/>
      <path d="M0 64h48M52 64h125M50 73h92" stroke="#bdbdbd"/>
      <path d="M8 27L1 63M19 27l-9 36M28 33l-8 30M46 8L35 63M58 29l-9 34M68 33l-7 30M82 27L73 63M88 45l-5 18M109 4L96 63M111 4l5 20M120 33l-7 30M128 27l-9 36M138 27l-9 36M152 33l-7 30M162 27l-9 36M184 27l-9 36" stroke-dasharray="1 3"/>
      <path d="M5 96h20M30 96h20M56 96h22M83 96h20M109 96h20M134 96h20M160 96h20M5 115h20M30 115h22M58 115h18M84 115h20M110 115h20M136 115h20M162 115h18"/>
      <path d="M7 101h16M32 100h18M58 102h16M86 100h16M111 102h16M137 100h15M163 102h15M9 107h14M34 106h12M60 108h14M87 107h12M112 106h16M138 108h14M164 107h14M52 87h34M106 87h14M126 87h14M56 78h3M56 83h10M74 82h20M104 79h16M128 78h14" stroke-dasharray="5 2"/>
    </svg>
  </div>
  <div class="vscroll d-flex flex-column align-items-center">
    <svg class="tri" viewBox="0 0 12 10"><path d="M0 9l6-8 6 8z"/></svg>
    <div class="vthumb flex-grow-1"></div>
    <svg class="tri" viewBox="0 0 12 10"><path d="M0 1l6 8 6-8z"/></svg>
  </div>
</main>

<div class="sheetbar d-flex align-items-start flex-shrink-0">
  <div class="sheet-nav d-flex dim">
    <button aria-label="上一张"><svg width="7" height="10"><path d="M6 1v8L1 5z" fill="currentColor"/></svg></button>
    <button aria-label="下一张"><svg width="7" height="10"><path d="M1 1v8l5-4z" fill="currentColor"/></svg></button>
  </div>
  <button class="sheet-tab">Sheet1</button>
  <button class="pt-1" aria-label="新工作表"><svg width="22" height="22" color="#666"><circle cx="11" cy="11" r="9.500"/><path d="M6 11h10M11 6v10" stroke-width="2"/></svg></button>
  <div class="hscroll ms-auto d-flex align-items-center">
    <svg width="28" height="18"><path d="M8 3v3M8 8v3M8 13v3" stroke-width="3"/></svg>
    <svg width="10" height="12" class="solid"><path d="M9 0v12L1 6z"/></svg>
    <div class="hthumb"></div>
    <svg width="10" height="12" class="solid"><path d="M1 0v12l8-6z"/></svg>
  </div>
</div>

<footer class="status d-flex align-items-center flex-shrink-0">
  <span class="ready">就绪</span>
  <svg width="18" height="16"><path d="M6 15H1V1h16v5M1 4h16M3 8h4M3 11h3"/><circle cx="12" cy="10.500" r="5"/><circle cx="12" cy="10.500" r="2" fill="currentColor"/></svg>
  <svg width="18" height="18" viewBox="-5 0 18 18" class="ms-3 me-2"><circle cx="8" cy="3" r="2"/><path d="M1 4q1 3 5 3v4l-2 6h2l2-4M15 4q-1 3-4 3v3M9 13l3 4 6-7M1 4h2M15 4h-2"/></svg>
  <span>辅助功能: 一切就绪</span>
  <button class="view-btn on ms-auto" aria-label="普通"><svg width="18" height="16"><path d="M1 1h16v14H1zM1 6h16M1 10.500h16M6.500 1v14M11.500 1v14"/></svg></button>
  <button class="view-btn" aria-label="页面布局"><svg width="18" height="16"><path d="M1 1h16v14H1zM4.500 3.500h9v9h-9zM6.500 6h5M6.500 8h5M6.500 10h5"/></svg></button>
  <button class="view-btn" aria-label="分页预览"><svg width="18" height="16"><path d="M1 1h16v14H1zM1 9h10V1M6 1v8"/></svg></button>
  <button class="ms-2" aria-label="缩小"><svg width="18" height="12"><path d="M0 6h10"/></svg></button>
  <input type="range" class="zoom-range" aria-label="缩放" min="10" max="190" value="100">
  <button aria-label="放大"><svg width="20" height="12"><path d="M6 6h10M11 1v10"/></svg></button>
  <span class="zoom-val">100%</span>
</footer>

<nav class="taskbar d-flex flex-shrink-0">
  <button class="sys" aria-label="开始"><svg width="20" height="20"><path stroke="none" fill="#fff" d="M0 3l9-1.500V9.500H0zM10 1.400L20 0v9.500H10zM0 10.500h9v8L0 17zM10 10.500h10V20l-10-1.400z"/></svg></button>
  <button class="sys" aria-label="搜索"><span class="round"><svg class="ic"><use href="#find"/></svg></span></button>
  <button class="sys" aria-label="任务视图"><svg width="21" height="20"><path d="M1 0v4h13V0M1 20v-4h13v4M1 6v8h13V6zM19 0v5M19 11v9"/><path d="M19 6v4" stroke-width="3"/></svg></button>
  <button class="task me-2" aria-label="浏览器"><svg viewBox="0 0 30 30"><path fill="#fff" d="M15 3c4-4 11-1 12 3 1 3 0 6-1 7 4 3 3 10 0 13-4 3-9 2-11 0-4 4-11 2-12-3-1-3 0-5 1-6C-1 13 1 6 4 4c4-3 9-2 11-1z"/><path fill="none" stroke="#4c211e" stroke-width="1.600" d="M14 2c-3 3-2 9 3 11M27 13c-5-3-11-1-11 4M16 27c4-4 2-10-3-11M3 17c4 3 10 1 11-5M15 9c3 1 5 4 4 6M14 21c-2-1-5-4-3-6"/></svg></button>
  <button class="task run" aria-label="Word"><svg viewBox="0 0 30 30"><path d="M8 2h21v7H8z" fill="#41a5ee"/><path d="M8 8h21v7H8z" fill="#2b7cd3"/><path d="M8 15h21v6H8z" fill="#185abd"/><path d="M8 21h21v7H8z" fill="#103f91"/><rect x="1" y="8" width="15" height="15" rx="1" fill="#185abd"/><text x="2" y="20">W</text></svg></button>
  <button class="task run" aria-label="文件资源管理器"><svg viewBox="0 0 30 30"><path d="M2 4h10l3 3h12v20H2z" fill="#e9a92c"/><path d="M2 9h27v18H2z" fill="#ffd86b"/><path d="M7 28V18q0-2 2-2h12q2 0 2 2v10h-4v-5h-8v5z" fill="#3f8fd0"/></svg></button>
  <button class="task" aria-label="360浏览器"><svg viewBox="0 0 30 30"><circle cx="15" cy="16" r="13" fill="#f2faec"/><circle cx="15" cy="16" r="11.500" fill="#58b531"/><path d="M9 14.500q1-5 6-5t6 5zM9 18h18v3h-6q-6 6-12-3z" fill="#fff"/><path d="M4 29Q-1 10 27 1 8 10 6 28z" fill="#6fbb2e"/></svg></button>
  <button class="task" aria-label="Edge"><svg viewBox="0 0 30 30"><circle cx="15" cy="15" r="14" fill="#1b77cf"/><path d="M1 15C2-3 29-3 29 13c0 7-9 7-10 3 1-7-13-9-18-1z" fill="#35c1b0"/><path d="M16 1c9 0 13 6 13 12 0 5-5 6-8 5 3-7-1-14-8-17z" fill="#4fd36a"/><path d="M10 17c0 8 8 11 15 8-6 7-18 5-20-5 0-5 5-9 9-8-3 1-4 3-4 5z" fill="#0f4f9e"/><path d="M13 17c-1-5 5-5 6-1 0 3 5 4 8 2-3 7-13 5-14-1z" fill="#4c211e"/></svg></button>
  <button class="task run" aria-label="PowerPoint"><svg viewBox="0 0 30 30"><circle cx="16" cy="15" r="13.500" fill="#d35230"/><path d="M16 1.500A13.500 13.500 0 0129.500 15H16z" fill="#ff8f6b"/><path d="M16 1.500V15H3A13.500 13.500 0 0116 1.500z" fill="#ed6c47"/><rect x="1" y="8" width="15" height="15" rx="1" fill="#c43e1c"/><text x="5" y="20">P</text></svg></button>
  <button class="task" aria-label="搜索工具"><svg viewBox="0 0 30 30"><path d="M3 2h25v20H3z" fill="#eef3f8"/><path d="M3 2h25v4H3z" fill="#3a78c8"/><path d="M6 9h18M6 12h10M6 15h8" stroke="#9ab"/><circle cx="19" cy="15" r="6.500" fill="#bfe3f5" stroke="#5c7f99" stroke-width="1.500"/><path d="M13 20l-8 8" stroke="#d6a676" stroke-width="4"/></svg></button>
  <button class="task" aria-label="媒体播放器"><svg viewBox="0 0 30 30"><path d="M22 4l6 1v22l-6 2z" fill="#4d94c4"/><path d="M3 4h20v24H3z" fill="#8fc1e0"/><circle cx="13" cy="16" r="8.500" fill="#f08a24"/><path d="M10 10.500l8 5.500-8 5.500z" fill="#fff"/></svg></button>
  <button class="task cur" aria-label="Excel"><svg><use href="#excel"/></svg></button>
  <button class="task" aria-label="Access"><svg viewBox="0 0 30 30"><path d="M8 5v20c0 4 21 4 21 0V5z" fill="#b7202f"/><path d="M8 5v7c0 4 21 4 21 0V5z" fill="#d9475b"/><ellipse cx="18.500" cy="5" rx="10.500" ry="3.500" fill="#f08a98"/><rect x="1" y="8" width="15" height="15" rx="1" fill="#a4262c"/><text x="4" y="20">A</text></svg></button>
  <button class="task run" aria-label="Camtasia"><svg viewBox="0 0 30 30"><rect width="30" height="30" rx="2" fill="#4d9410"/><path d="M24 4l-3 5H10v12h11l3 5H9q-4 0-4-4V8q0-4 4-4z" fill="#fff"/></svg></button>
  <button class="task run" aria-label="Camtasia 录制器"><svg viewBox="0 0 30 30"><rect width="30" height="30" rx="2" fill="#fb5f43"/><path d="M24 4l-3 5H10v12h11l3 5H9q-4 0-4-4V8q0-4 4-4z" fill="#fff"/></svg></button>
  <div class="ms-auto d-flex align-items-center">
    <button class="tray" aria-label="隐藏的图标"><svg width="16" height="10"><path d="M1 9l7-7 7 7"/></svg></button>
    <span class="tray"><svg width="14" height="22"><rect x="3" y="1" width="8" height="14" rx="2" fill="#fff"/><path d="M1 10v4q0 3 6 3t6-3v-4M7 17v4M4 21h6"/></svg></span>
    <span class="tray"><svg width="22" height="16"><rect x="6" y="5" width="12" height="8" fill="#fff"/><path d="M5 9v6h15V3H9M21.500 7v4M1 4h6v3H1zM2 1v3M6 1v3M4 7v4"/></svg></span>
    <span class="tray"><svg width="18" height="18"><path d="M1 17C1 8 7 2 16 1M5 17c0-7 4-11 11-12M9 17c0-4 3-7 7-8M12 17c0-3 2-4 4-4" stroke-width="1.200"/><circle cx="15" cy="16" r="1.500" fill="#fff"/></svg></span>
    <span class="tray"><svg width="20" height="18"><path d="M1 6h3l5-4v14l-5-4H1zM12 6q2 3 0 6M15 4q3 5 0 10"/><path d="M17 2q4 7 0 14" stroke="#a88"/></svg></span>
    <button class="tray ime">英</button>
    <div class="clock">14:42<br>2023/3/8</div>
    <span class="tray faint"><svg width="16" height="16"><rect x="1" y="1" width="14" height="14" rx="1"/><path d="M6 5l5 3-5 3z" fill="currentColor"/></svg></span>
    <button class="tray" aria-label="通知"><svg width="20" height="20"><path d="M1 1h18v14h-6l-3 3-3-3H1z"/></svg></button>
    <div class="edge-line"></div>
  </div>
</nav>

<script>
const heads = ["姓名","第一季度","第二季度","第三季度","第四季度"];
const people = `张宏伟 81405 26894 91809 87311
陈国祥 37642 95218 83062 55206
陈平 10590 85945 33629 10305
陈艳华 31508 30008 9001 95988
邓海燕 44092 99312 63458 83164
范惠 89890 4009 77393 39592
高艳 35624 96534 9776 93835
黄慧 24910 41773 61842 22639
纪海燕 87794 16679 81450 99679
李军 81519 68825 40095 1765
明汉琴 69456 4710 56428 14723
沈亚杰 45189 84047 35407 38033
时扬 45205 20499 50626 86231
汤丽丽 4863 15862 19180 50353
王丹 97834 37341 57377 29298
吴凤祥 95364 65051 40620 4530`.split("\n").map(r => r.split(" "));
const rows = [heads, ...people];
const letters = [..."ABCDEFGHIJKLMNOPQRS"];
let html = "<colgroup><col class='rowno'>" + letters.map(() => "<col class='std'>").join("") + "<col></colgroup>";
html += "<thead><tr><th><div class='corner'></div></th>" + letters.map(l => `<th${l === "F" ? " class='hit'" : ""}>${l}</th>`).join("") + "<th></th></tr></thead><tbody>";
for (let r = 1; r <= 26; r++) {
  html += `<tr><th${r > 1 && r < 18 ? " class='hit'" : ""}>${r}</th>`;
  for (let c = 0; c < 20; c++) {
    const v = (rows[r - 1] || [])[c] || "";
    const cls = c === 5 && r > 2 && r < 18 ? "shade" : (c === 0 || r === 1) && v ? "zh" : "";
    html += `<td${cls ? ` class='${cls}'` : ""}>${v}</td>`;
  }
  html += "</tr>";
}
document.getElementById("grid").innerHTML = html + "</tbody>";
</script>
</body>
</html>
